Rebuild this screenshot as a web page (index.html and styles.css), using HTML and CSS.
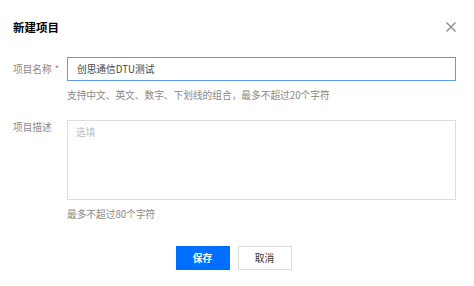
FILE: index.html
```html
<!DOCTYPE html>
<html>
<head>
  <meta charset="utf-8">
  <title>新建项目</title>
  <link rel="stylesheet" href="styles.css">
</head>

<body>
  <div class="dialog">
    <div class="dialog-header">
      <h3 class="dialog-title">新建项目</h3>
      <button type="button" class="close-btn" aria-label="关闭">
        <svg width="10" height="10" viewBox="0 0 10 10">
          <path d="M0.5 0.5 L9.5 9.5 M9.5 0.5 L0.5 9.5" stroke="#888" stroke-width="1.3" fill="none"/>
        </svg>
      </button>
    </div>

    <form class="project-form">
      <div class="form-row">
        <label class="form-label" for="project-name">项目名称<span class="required">*</span></label>
        <div class="form-field">
          <input type="text" id="project-name" class="text-input is-focused" value="创思通信DTU测试">
          <div class="hint">支持中文、英文、数字、下划线的组合，最多不超过20个字符</div>
        </div>
      </div>

      <div class="form-row">
        <label class="form-label form-label-top" for="project-desc">项目描述</label>
        <div class="form-field">
          <textarea id="project-desc" class="text-area" placeholder="选填"></textarea>
          <div class="hint">最多不超过80个字符</div>
        </div>
      </div>

      <div class="form-actions">
        <button type="submit" class="btn btn-primary">保存</button>
        <button type="button" class="btn btn-default">取消</button>
      </div>
    </form>
  </div>
</body>
</html>
```

FILE: styles.css
```css
body {
  margin: 0;
  background-color: #fff;
  font-family: "Noto Sans CJK SC", "Noto Sans", sans-serif;
  font-size: 9.7px;
  color: #444;
}

.dialog {
  width: 474px;
  height: 286px;
  box-sizing: border-box;
  padding: 18px 18px 0 13px;
}

.dialog-header {
  display: flex;
  align-items: center;
  justify-content: space-between;
  height: 18px;
}

.dialog-title {
  margin: 0;
  font-size: 11.5px;
  font-weight: bold;
  color: #000;
  line-height: 18px;
}

.close-btn {
  border: none;
  background: none;
  padding: 0;
  width: 10px;
  height: 10px;
  display: flex;
  cursor: pointer;
}

.project-form {
  margin-top: 21px;
}

.form-row {
  display: flex;
  margin-bottom: 18px;
}

.form-label {
  width: 54px;
  flex-shrink: 0;
  color: #888;
  line-height: 14px;
  padding-top: 5px;
}

.form-label-top {
  padding-top: 0;
}

.required {
  color: #ee6b6b;
  margin-left: 3px;
}

.form-field {
  flex: 1;
}

.text-input, .text-area {
  display: block;
  width: 100%;
  box-sizing: border-box;
  border: 1px solid #ddd;
  border-radius: 0;
  font-family: inherit;
  font-size: 9.7px;
  color: #444;
  outline: none;
}

.text-input {
  height: 24px;
  padding: 0 9px;
}

.text-input.is-focused {
  border-color: #5d9bef;
}

.text-area {
  height: 80px;
  padding: 4px 8px;
  resize: none;
  line-height: 14px;
}

.text-area::placeholder {
  color: #bbb;
}

.hint {
  margin-top: 7px;
  line-height: 14px;
  color: #888;
}

.form-actions {
  display: flex;
  justify-content: center;
  gap: 8px;
  padding-top: 7px;
  padding-right: 2px;
}

.btn {
  width: 54px;
  height: 24px;
  font-family: inherit;
  font-size: 9.7px;
  border-radius: 0;
  cursor: pointer;
}

.btn-primary {
  background-color: #006eff;
  border: 1px solid #006eff;
  color: #fff;
  font-weight: bold;
}

.btn-default {
  background-color: #fff;
  border: 1px solid #ddd;
  color: #333;
}
```
